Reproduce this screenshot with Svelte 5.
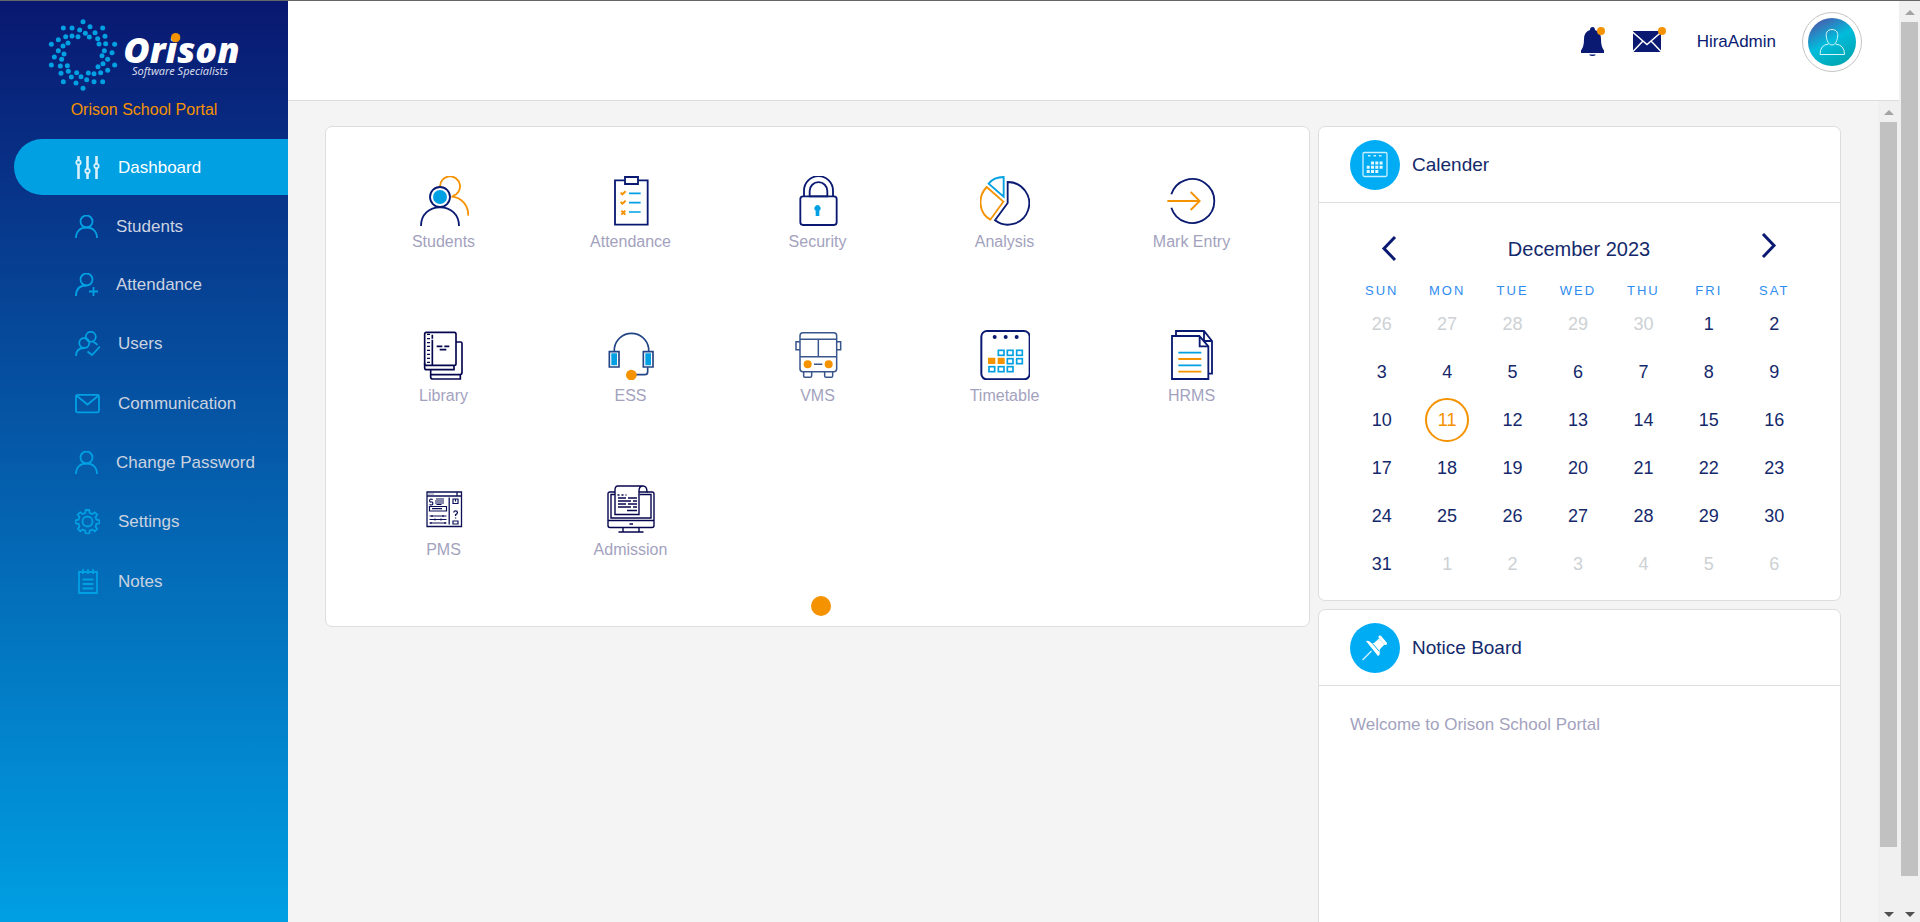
<script>
    const NAVY = "#0a1a72";
    const BLUE = "#00a0e3";
    const ORANGE = "#f49200";

    let activeMenu = "Dashboard";

    const person = `<circle cx="11.5" cy="6.5" r="6"/><path d="M1 23C1 16 5.500 12.500 11.500 12.500S22 16 22 23"/>`;

    const menu = [
        { label: "Dashboard", size: 25, art: `<path stroke-width="2.600" d="M3.500 1v23M12.500 1v23M21.500 1v23"/><g fill="#00a0e3"><circle cx="3.500" cy="7.500" r="2.200"/><circle cx="12.500" cy="16" r="2.200"/><circle cx="21.500" cy="11" r="2.200"/></g>` },
        { label: "Students", size: 23, art: person },
        { label: "Attendance", size: 23, art: `<circle cx="11.500" cy="6.500" r="6"/><path d="M1 23C1 16 5 12.500 11.500 12.500M18.500 14v9M14 18.500h9"/>` },
        { label: "Users", size: 25, art: `<circle cx="15.800" cy="5.800" r="5"/><circle cx="9.300" cy="12" r="5"/><path d="M1 25c0-5 3-8 8.300-8M18 11q3 1 4.500 3M12.500 20.500l4.500 3.500 8-8.500"/>` },
        { label: "Communication", size: 25, art: `<rect x="1" y="3.800" width="23" height="17.500" rx="1.500"/><path d="M2 5l10.500 8.500L23 5"/>` },
        { label: "Change Password", size: 23, art: person },
        { label: "Settings", size: 25, art: `<circle cx="12.500" cy="12.500" r="5"/><path d="M10.800 1h3.400l.6 3 2.500 1 2.500-1.700 2.400 2.400-1.700 2.500 1 2.500 3 .6v3l-3 .6-1 2.500 1.700 2.500-2.400 2.400-2.500-1.700-2.500 1-.6 3h-3.400l-.6-3-2.500-1-2.500 1.700-2.400-2.400 1.700-2.500-1-2.500-3-.6v-3l3-.6 1-2.500-1.700-2.500 2.400-2.400L7.700 5l2.500-1z"/>` },
        { label: "Notes", size: 25, art: `<path d="M4 3h18v21H4zM7.500 10.500h11M7.500 15h11M7.500 19.500h11M8 0v5M13 0v5M18 0v5"/>` }
    ];

    // small boxes in the timetable grid
    const cells = [[111, 89], [138, 89], [166, 89], [138, 114], [166, 114], [83, 138], [111, 138], [138, 138]]
        .map(([x, y]) => `<rect x="${x + 2}" y="${y + 2}" width="17" height="15"/>`).join("");

    const holes = [43, 56, 68, 79, 91, 103, 115, 127].map((y) => `M81 ${y}h9`).join("");

    const tiles = [
        {
            label: "Students", box: "57 48 150 150",
            art: `<g stroke-width="5.500"><path stroke="${ORANGE}" d="M120 79a30 30 0 1 1 38 29M154 110c30 2 51 25 51 57"/><circle cx="120" cy="111" r="30" stroke="${NAVY}"/><path stroke="${NAVY}" d="M63 198c0-34 24-56 57-56s57 22 57 56"/></g><circle cx="120" cy="111" r="21" fill="${BLUE}"/>`
        },
        {
            label: "Attendance", box: "618 48 150 150",
            art: `<g stroke="${NAVY}" stroke-width="5.500"><path d="M674 61h-29v133h98V61h-28"/><path d="M675 51h39v21h-39z"/></g><path stroke="${BLUE}" stroke-width="5" d="M687 100h35M687 128h35M687 156h35"/><path stroke="${ORANGE}" stroke-width="6" d="M662 98l5 5 10-9M662 126l5 5 10-9M664 152l12 12M676 152l-12 12"/>`
        },
        {
            label: "Security", box: "1178 48 150 150",
            art: `<g stroke="${NAVY}" stroke-width="5.500"><rect x="1200" y="109" width="109" height="86" rx="8"/><path d="M1211 109V92a43 43 0 0 1 87 0v17M1228 109V93a26 26 0 0 1 53 0v16z"/></g><path fill="${BLUE}" d="M1246 152a9 9 0 1 1 11 0v16h-11z"/>`
        },
        {
            label: "Analysis", box: "58 48 150 150",
            art: `<g stroke-width="5.500"><path stroke="${NAVY}" d="M141 66a64 64 0 1 1-38 115l38-52z"/><path stroke="${BLUE}" d="M129 51c-19 0-35 7-45 20l45 39z"/><path stroke="${ORANGE}" d="M78 81l50 44-39 54C54 159 50 111 78 81z"/></g>`
        },
        {
            label: "Mark Entry", box: "618 48 150 150",
            art: `<path stroke="${NAVY}" stroke-width="5.500" d="M631 103a66 66 0 1 1 0 40"/><path stroke="${ORANGE}" stroke-width="5.500" d="M619 123h96M689 96l27 27-27 27"/>`
        },
        {
            label: "Library", box: "57 30 150 150",
            art: `<g stroke="#06064f" stroke-width="5"><rect x="74" y="37" width="94" height="99" rx="5"/><path d="M74 129v14q0 6 6 6h82v-13M97 59v76M97 44v12M168 66h14q4 0 4 4v87q0 7-7 7H92v-14M92 164v7q0 6 6 6h83v-13M110 79h17M133 79h15M119 89h20"/><path stroke-width="4" d="${holes}"/></g>`
        },
        {
            label: "ESS", box: "618 30 150 150",
            art: `<g stroke="#234585" stroke-width="5"><path d="M643 94V85a52 52 0 0 1 103 0v9M743 142v13q0 9-9 9h-26"/><path fill="#fff" d="M628 95h29v46h-29zM730 95h29v46h-29z"/></g><path fill="${BLUE}" d="M634 100h17v36h-17zM736 100h17v36h-17z"/><circle cx="694" cy="165" r="16" fill="${ORANGE}"/>`
        },
        {
            label: "VMS", box: "1178 30 150 150",
            art: `<g stroke="#38558c" stroke-width="4.500"><rect x="1199" y="38" width="110" height="117" rx="9"/><path d="M1199 58h110M1199 110h110M1254 58v52M1199 65h-12v24h12M1309 65h12v24h-12M1241 133h25M1210 156v12q0 4 4 4h16q4 0 4-4v-12M1273 156v12q0 4 4 4h16q4 0 4-4v-12"/></g><circle cx="1222" cy="133" r="12" fill="${ORANGE}"/><circle cx="1285" cy="133" r="12" fill="${ORANGE}"/>`
        },
        {
            label: "Timetable", box: "58 30 150 150",
            art: `<rect x="62" y="33" width="145" height="145" rx="17" stroke="${NAVY}" stroke-width="6"/><g fill="${NAVY}"><circle cx="102" cy="51" r="6"/><circle cx="135" cy="51" r="6"/><circle cx="168" cy="51" r="6"/></g><g stroke="${BLUE}" stroke-width="5">${cells}</g><path fill="${ORANGE}" d="M82 113h22v19H82zM111 113h21v19h-21z"/>`
        },
        {
            label: "HRMS", box: "618 30 150 150",
            art: `<g stroke="${NAVY}" stroke-width="5.500"><path d="M645 46V33h84l24 30v98h-9M729 33v30h24M633 48h82l27 31v98H633z"/><path d="M716 50v29h25"/></g><g stroke-width="5.500"><path stroke="${BLUE}" d="M652 98h69M652 136h69"/><path stroke="${ORANGE}" d="M652 117h69M652 155h69"/></g>`
        },
        {
            label: "PMS", box: "0 0 50 50",
            art: `<g stroke="#0c1156"><path stroke-width="1.300" d="M8 8h34.500v34.500H8zM8 12h34.500M30.200 13.500v27M38 8v4"/><path stroke-width="1" d="M9.500 10h5" stroke-dasharray="1"/><path stroke-width="1.200" d="M13.800 15.500q-3.200-1-3.200 1t1.600 1.500 1.600 1.600-3.200 1M17 15h8M16 17h9M16 19h9M17.500 20.500h5M10.500 22.500h17v4.500h-17zM13 24.700h10M34 15h5v4.500h-5zM36.500 15v2.500M34 37h5v3h-5zM10.500 32h17M10.500 35.500h17M10.500 39h17M13 31v2M24 31v2M16 34.500v2M22 34.500v2M12 38v2M26 38v2"/><path stroke-width="1.300" d="M34.800 28.500q0-1.700 1.800-1.700t1.800 1.700-1.800 2.200v1.300M36.600 33.500v1"/></g>`
        },
        {
            label: "Admission", box: "0 0 50 50",
            art: `<g stroke="#06064f" stroke-width="1.400"><path d="M9 8H4q-2 0-2 2v31.500q0 2 2 2h42q2 0 2-2V10q0-2-2-2h-5M9 10.500H5V34h40V10.500H33.500M2 36.500h46M17 43.500v4M33 43.500v4M12.500 48h25M23.500 40h3.500"/><path fill="#fff" d="M37 2H12q-3 0-3 4v24.500h24V7q0-5 4-5t4 6h-8"/><path d="M11.500 11h9" stroke-dasharray="2"/><path d="M12 14h8M22 14h9M12 17h13M27 17h4M12 20h8M22 20h9M12 23h13M27 23h4M21 26.500h10"/></g>`
        }
    ];

    // ring of dots in the logo
    const logoDots = [
        [249, 65], [270, 80], [308, 84], [190, 84], [216, 84], [239, 90], [256, 100], [285, 98], [315, 109], [268, 111],
        [293, 116], [297, 132], [317, 131], [344, 133], [313, 152], [336, 158], [306, 167], [323, 178], [309, 191],
        [344, 195], [294, 200], [323, 211], [302, 218], [282, 221], [265, 219], [308, 245], [282, 245], [260, 239],
        [249, 265], [243, 230], [228, 249], [230, 218], [214, 231], [205, 214], [190, 245], [183, 220], [202, 197],
        [181, 198], [154, 195], [185, 178], [163, 171], [192, 162], [175, 152], [189, 138], [154, 133], [204, 129],
        [175, 119], [197, 110], [216, 108], [234, 110]
    ];

    const monthNames = ["January", "February", "March", "April", "May", "June", "July", "August", "September", "October", "November", "December"];
    const weekdays = ["SUN", "MON", "TUE", "WED", "THU", "FRI", "SAT"];
    const today = new Date(2023, 11, 11);

    let year = 2023;
    let month = 11;

    const buildWeeks = (y, m) => {
        const first = new Date(y, m, 1).getDay();
        return Array.from({ length: 6 }, (_, w) =>
            Array.from({ length: 7 }, (_, d) => {
                const date = new Date(y, m, 1 - first + w * 7 + d);
                return {
                    day: date.getDate(),
                    other: date.getMonth() !== m,
                    today: date.getTime() === today.getTime()
                };
            })
        );
    };

    $: weeks = buildWeeks(year, month);

    const changeMonth = (step) => {
        const next = new Date(year, month + step, 1);
        year = next.getFullYear();
        month = next.getMonth();
    };
</script>

<div class="window">
    <aside class="sidebar">
        <svg class="logo" viewBox="144 54 576 222" role="img" aria-label="Orison Software Specialists">
            {#each logoDots as [cx, cy]}
                <circle {cx} {cy} r="7.5" fill="#00a0e3" />
            {/each}
            <text class="logo-name" x="370" y="189">Orison</text>
            <circle cx="527" cy="113" r="14" fill="#f49200" />
            <text class="logo-sub" x="396" y="226">Software Specialists</text>
        </svg>
        <div class="portal">Orison School Portal</div>
        <nav>
            {#each menu as item}
                <a
                    href="#{item.label.replace(' ', '-')}"
                    class:active={item.label === activeMenu}
                    onclick={() => (activeMenu = item.label)}
                >
                    <svg width={item.size} height={item.size} viewBox="0 0 {item.size} {item.size}">{@html item.art}</svg>
                    {item.label}
                </a>
            {/each}
        </nav>
    </aside>

    <div class="page">
        <header>
            <button class="icon-btn" aria-label="Notifications">
                <svg width="26" height="30" viewBox="0 0 26 30">
                    <path fill="#0a1a72" d="M10 3q0-3 2.500-3T15 3q6 2 6 9 0 8 3 11.500V26H1v-2.500Q4 20 4 12q0-7 6-9zM9 27.500h7q-1 1.500-3.500 1.500T9 27.500z" />
                    <circle cx="21" cy="4" r="4" fill="#f49200" />
                </svg>
            </button>
            <button class="icon-btn" aria-label="Messages">
                <svg width="36" height="30" viewBox="0 0 36 30">
                    <path fill="#0a1a72" d="M1 4h28v21H1z" />
                    <path fill="none" stroke="#fff" stroke-width="1.500" d="M0 4.500l15 13 15-13M0 25.500l10.500-11M30 25.500l-10.500-11" />
                    <circle cx="30" cy="4" r="4" fill="#f49200" />
                </svg>
            </button>
            <span class="user">HiraAdmin</span>
            <button class="avatar" aria-label="Profile">
                <svg width="48" height="48" viewBox="0 0 48 48">
                    <defs>
                        <linearGradient id="avatar-fill" x1="0.15" y1="0" x2="0.7" y2="1">
                            <stop offset="0" stop-color="#5350a8" />
                            <stop offset="0.5" stop-color="#00bcdc" />
                            <stop offset="1" stop-color="#00a6b0" />
                        </linearGradient>
                    </defs>
                    <circle cx="24" cy="24" r="24" fill="url(#avatar-fill)" />
                    <path fill="none" stroke="#d8f6fa" d="M24 11.500c-5 0-6.500 4-5.500 8 .8 5 3 7.500 5.500 7.500s4.700-2.500 5.500-7.500c1-4-.5-8-5.500-8zM20.500 26q-8.500 1-8.500 10.500h24.500Q36.500 27 27.500 26" />
                </svg>
            </button>
        </header>

        <div class="body">
            <main>
                <section class="card tiles-card">
                    <div class="tiles">
                        {#each tiles as tile}
                            <a class="tile" href="#{tile.label.replace(' ', '-')}">
                                <svg width="50" height="50" viewBox={tile.box}>{@html tile.art}</svg>
                                <span>{tile.label}</span>
                            </a>
                        {/each}
                    </div>
                    <div class="dots">
                        <button aria-label="Page 1"></button>
                    </div>
                </section>

                <div class="side">
                    <section class="card">
                        <div class="card-head">
                            <svg width="50" height="50" viewBox="0 0 50 50">
                                <circle cx="25" cy="25" r="25" fill="#00adf4" />
                                <rect x="13" y="12.500" width="24" height="24" rx="1.500" fill="none" stroke="#c9f0ff" stroke-width="1.300" />
                                <path stroke="#c9f0ff" stroke-width="1.500" d="M18 15.700h2.500M23.500 15.700h2.500M29 15.700h2.500" />
                                <path fill="#e4f8ff" d="M21 21.500h3v3h-3zM25.300 21.500h3v3h-3zM29.600 21.500h3v3h-3zM16.700 25.800h3v3h-3zM21 25.800h3v3h-3zM25.300 25.800h3v3h-3zM29.600 25.800h3v3h-3zM16.700 30.100h3v3h-3zM21 30.100h3v3h-3zM25.300 30.100h3v3h-3z" />
                            </svg>
                            <h2>Calender</h2>
                        </div>
                        <div class="calendar">
                            <div class="month">
                                <button aria-label="Previous month" onclick={() => changeMonth(-1)}>
                                    <svg width="16" height="32" viewBox="0 0 16 32"><path d="M14 4L3 15.500 14 27" /></svg>
                                </button>
                                <span>{monthNames[month]} {year}</span>
                                <button aria-label="Next month" onclick={() => changeMonth(1)}>
                                    <svg width="16" height="32" viewBox="0 0 16 32"><path d="M2 1l11 11.500L2 24" /></svg>
                                </button>
                            </div>
                            <table>
                                <thead>
                                    <tr>
                                        {#each weekdays as name}
                                            <th>{name}</th>
                                        {/each}
                                    </tr>
                                </thead>
                                <tbody>
                                    {#each weeks as week}
                                        <tr>
                                            {#each week as cell}
                                                <td class:other={cell.other} class:today={cell.today}><span>{cell.day}</span></td>
                                            {/each}
                                        </tr>
                                    {/each}
                                </tbody>
                            </table>
                        </div>
                    </section>

                    <section class="card notice">
                        <div class="card-head">
                            <svg width="50" height="50" viewBox="0 0 50 50">
                                <circle cx="25" cy="25" r="25" fill="#00adf4" />
                                <path stroke="#fff" stroke-width="3" stroke-linecap="round" d="M30 14l5.500 6.500" />
                                <path fill="#fff" d="M16 18q3-1 6 2.500l2-.5 5-4.500 5.500 6-4.500 4.500-.5 2.500q1 3-1.500 4.500z" />
                                <path stroke="#00adf4" stroke-width="1" d="M22.500 20.500l6.500 7.500" />
                                <path stroke="#c9f0ff" stroke-width="1.500" d="M21.500 28l-9 9" />
                            </svg>
                            <h2>Notice Board</h2>
                        </div>
                        <p>Welcome to Orison School Portal</p>
                    </section>
                </div>
            </main>
            <div class="scrollbar inner" aria-hidden="true">
                <i class="up"></i>
                <div class="track"><div class="thumb"></div></div>
                <i class="down"></i>
            </div>
        </div>
    </div>

    <div class="scrollbar outer" aria-hidden="true">
        <i class="up"></i>
        <div class="track"><div class="thumb"></div></div>
        <i class="down"></i>
    </div>
</div>

<style>
    :global(body) {
        margin: 0;
        font-family: "Liberation Sans", Arial, Helvetica, sans-serif;
    }

    .window {
        display: flex;
        height: 100vh;
        box-sizing: border-box;
        border-top: 1px solid #666;
        background: #f4f4f4;
    }

    button {
        padding: 0;
        border: none;
        background: none;
        font: inherit;
        cursor: pointer;
    }

    a {
        text-decoration: none;
    }

    svg {
        display: block;
        flex: none;
    }

    /* sidebar */
    .sidebar {
        flex: 0 0 288px;
        background: linear-gradient(#091871, #009fe3);
    }

    .logo {
        width: 192px;
        height: 74px;
        margin: 17px 0 6px 48px;
    }

    .logo-name {
        fill: #fff;
        font: italic 800 108px "Open Sans", "Noto Sans", sans-serif;
    }

    .logo-sub {
        fill: #d5daea;
        font: italic 400 33px "Noto Sans", "Open Sans", sans-serif;
    }

    .portal {
        margin-bottom: 17px;
        color: #f49200;
        font-size: 16px;
        line-height: 24px;
        text-align: center;
    }

    nav {
        display: flex;
        flex-direction: column;
        gap: 4px;
        padding-left: 14px;
    }

    nav a {
        display: flex;
        align-items: center;
        gap: 18px;
        padding: 16px 0 15px 61px;
        border-radius: 28px 0 0 28px;
        color: #ccd3e0;
        font-size: 17px;
        line-height: 20px;
    }

    nav a svg {
        fill: none;
        stroke: #00a0e3;
        stroke-width: 1.8;
    }

    nav a.active {
        background: #00a0e3;
        color: #fff;
    }

    nav a.active svg {
        stroke: #d9f1fb;
    }

    /* top bar */
    .page {
        flex: 1;
        min-width: 0;
        display: flex;
        flex-direction: column;
    }

    header {
        display: flex;
        justify-content: flex-end;
        align-items: center;
        gap: 26px;
        padding: 11px 37px 28px;
        border-bottom: 1px solid #ddd;
        background: #fff;
    }

    .user {
        margin-left: 3px;
        color: #0a1a72;
        font-size: 17px;
        line-height: 20px;
    }

    .avatar {
        padding: 5px;
        border: 1px solid #c4c4c4;
        border-radius: 50%;
    }

    /* content */
    .body {
        flex: 1;
        min-height: 0;
        display: flex;
    }

    main {
        flex: 1;
        display: grid;
        grid-template-columns: 985fr 523fr;
        align-items: start;
        gap: 8px;
        padding: 25px 37px 0;
        overflow-y: auto;
        scrollbar-width: none;
    }

    .card {
        border: 1px solid #ddd;
        border-radius: 7px;
        background: #fff;
    }

    .tiles-card {
        padding: 49px 24px 10px;
    }

    .tiles {
        display: grid;
        grid-template-columns: repeat(5, 1fr);
        row-gap: 76px;
    }

    .tile {
        display: flex;
        flex-direction: column;
        align-items: center;
        gap: 4px;
        color: #a3a2be;
        font-size: 16px;
        line-height: 24px;
    }

    .tile svg {
        fill: none;
    }

    .dots {
        display: flex;
        justify-content: center;
        margin-top: 34px;
        padding-left: 6px;
    }

    .dots button {
        width: 20px;
        height: 20px;
        border-radius: 50%;
        background: #f49200;
    }

    .side {
        display: flex;
        flex-direction: column;
        gap: 8px;
    }

    .card-head {
        display: flex;
        align-items: center;
        gap: 12px;
        padding: 13px 31px 12px;
        border-bottom: 1px solid #ddd;
    }

    h2 {
        margin: 0;
        color: #14296b;
        font-size: 19px;
        font-weight: 400;
    }

    .calendar {
        padding: 21px 33px 12px 30px;
        color: #14296b;
    }

    .month {
        display: flex;
        justify-content: space-between;
        align-items: center;
        height: 50px;
        margin-bottom: 6px;
        padding: 0 30px 0 32px;
        font-size: 20px;
    }

    .month path {
        fill: none;
        stroke: #0a1a72;
        stroke-width: 3;
    }

    table {
        width: 100%;
        border-collapse: collapse;
        table-layout: fixed;
    }

    th {
        height: 20px;
        padding: 0;
        color: #2f8cf0;
        font-size: 13px;
        font-weight: 400;
        letter-spacing: 2px;
    }

    td {
        height: 48px;
        padding: 0;
        font-size: 18px;
        text-align: center;
    }

    td.other {
        color: #cdd1d4;
    }

    td.today span {
        display: inline-block;
        width: 40px;
        border: 2px solid #f49200;
        border-radius: 50%;
        color: #f49200;
        line-height: 40px;
    }

    .notice {
        min-height: 400px;
    }

    .notice p {
        margin: 29px 31px;
        color: #a3a2be;
        font-size: 17px;
        line-height: 20px;
    }

    /* scrollbars */
    .scrollbar {
        display: flex;
        flex: 0 0 21px;
        flex-direction: column;
        align-items: center;
        justify-content: space-between;
        box-sizing: border-box;
        padding: 9px 0 5px;
        background: #f0f0f0;
    }

    .track {
        flex: 1;
        align-self: stretch;
        margin: 7px 2px 10px;
    }

    .thumb {
        background: #c1c1c1;
    }

    .outer .thumb {
        height: 97%;
    }

    .inner .thumb {
        height: 93%;
    }

    .up,
    .down {
        border: 5px solid transparent;
    }

    .up {
        border-top: none;
        border-bottom-color: #a3a3a3;
    }

    .down {
        border-bottom: none;
        border-top-color: #505050;
    }
</style>
